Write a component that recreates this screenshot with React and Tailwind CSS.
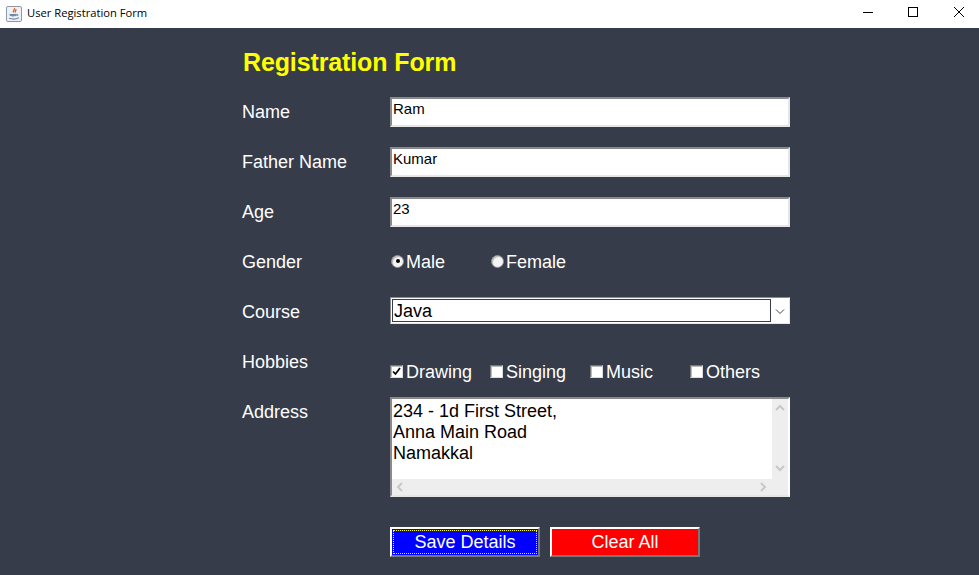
const labelCls = 'w-[148px] shrink-0 text-[18px] leading-[50px] text-white'

const JavaIcon = () => (
  <svg width="16" height="16" viewBox="0 0 16 16" className="shrink-0">
    <rect x="0.5" y="0.5" width="15" height="15" rx="1.5" fill="#eef1f5" stroke="#8d99a8" />
    <path d="M8.500 2c1 1.500-2 2.500-1 4.500 M10.500 3.500c-1.500 1-1.500 2-1 3" fill="none" stroke="#e0661f" strokeWidth="1.300" />
    <path d="M3.500 8h7v.8c0 1.200-1.500 1.700-3.500 1.700s-3.500-.5-3.500-1.700z M10.500 8.300h1.800v1.200l-1.800.7" fill="#6f8ba8" />
    <path d="M3 12.300c3 1 7 1 10-.6" fill="none" stroke="#6f8ba8" strokeWidth="1.100" />
  </svg>
)

const TitleBar = () => (
  <div className="flex h-[28px] items-center bg-white pl-[6px] text-black">
    <JavaIcon />
    <span className="mb-[2px] ml-[5px] font-['Open_Sans',sans-serif] text-[11.2px]">User Registration Form</span>
    <div className="ml-auto flex items-center">
      <svg width="134" height="28" viewBox="0 0 134 28">
        <path d="M18 12.500h10" stroke="#000" />
        <rect x="63.500" y="7.500" width="9" height="9" fill="none" stroke="#000" />
        <path d="M109 7l10 10M119 7l-10 10" stroke="#000" />
      </svg>
    </div>
  </div>
)

const TextInput = ({ value }) => (
  <div className="h-[30px] w-[400px] border-2 border-t-[#8a8a8a] border-l-[#8a8a8a] border-r-[#e6e6e6] border-b-[#e6e6e6] bg-white pl-px pt-px text-[15px] leading-[18px] text-black">
    {value}
  </div>
)

const Field = ({ label, value }) => (
  <div className="flex h-[50px] items-center">
    <div className={labelCls}>{label}</div>
    <TextInput value={value} />
  </div>
)

const Radio = ({ label, checked, className }) => (
  <div className={`flex items-center text-[18px] text-white ${className}`}>
    <span className="mb-[2px] ml-px flex h-[13px] w-[13px] items-center justify-center rounded-full border border-[#8c8c8c] bg-[#f4f4f4] shadow-[inset_1px_1px_0_#bbb]">
      {checked && <span className="h-[4px] w-[4px] rounded-full bg-black" />}
    </span>
    <span className="ml-[2px]">{label}</span>
  </div>
)

const Check = ({ label, checked, className }) => (
  <div className={`flex items-center text-[18px] text-white ${className}`}>
    <span className="mb-px flex h-[13px] w-[13px] items-center justify-center border border-t-[#777] border-l-[#777] border-r-[#ddd] border-b-[#ddd] bg-white shadow-[inset_1px_1px_0_#bbb]">
      {checked && (
        <svg width="9" height="9" viewBox="0 0 9 9">
          <path d="M1 4.500l2.500 2.500 4.500-6" fill="none" stroke="#000" strokeWidth="1.700" />
        </svg>
      )}
    </span>
    <span className="ml-[3px]">{label}</span>
  </div>
)

const Chevron = ({ d }) => (
  <svg width="10" height="10" viewBox="0 0 10 10">
    <path d={d} fill="none" stroke="#c8c8c8" strokeWidth="2" />
  </svg>
)

const AddressBox = () => (
  <div className="h-[100px] w-[400px] border-2 border-t-[#8a8a8a] border-l-[#8a8a8a] border-r-white border-b-[#e6e6e6] bg-[#eeeeee]">
    <div className="flex h-[80px]">
      <div className="flex-1 bg-white pl-px pt-[2px] text-[18px] leading-[21px] text-black">
        <div>234 - 1d First Street,</div>
        <div>Anna Main Road</div>
        <div>Namakkal</div>
      </div>
      <div className="flex w-[16px] flex-col items-center justify-between pb-[6px] pt-[4px]">
        <Chevron d="M1 7l4-4 4 4" />
        <Chevron d="M1 3l4 4 4-4" />
      </div>
    </div>
    <div className="flex h-[16px] items-center justify-between pl-[3px] pr-[20px]">
      <Chevron d="M7 1L3 5l4 4" />
      <Chevron d="M3 1l4 4-4 4" />
    </div>
  </div>
)

export default function App() {
  return (
    <div className="h-[575px] w-[979px] overflow-hidden bg-[#363c4a] font-['Liberation_Sans',Arial,sans-serif]">
      <TitleBar />
      <div className="pl-[242px] pt-[9px]">
        <div className="h-[50px] pl-px text-[25px] font-bold leading-[50px] tracking-[-0.12px] text-[#ffff00]">Registration Form</div>
        <Field label="Name" value="Ram" />
        <Field label="Father Name" value="Kumar" />
        <Field label="Age" value="23" />
        <div className="flex h-[50px] items-center">
          <div className={labelCls}>Gender</div>
          <Radio label="Male" checked className="w-[100px]" />
          <Radio label="Female" />
        </div>
        <div className="flex h-[50px] items-center">
          <div className={labelCls}>Course</div>
          <div className="mb-[3px] flex h-[27px] w-[400px] items-stretch border border-t-[#8a8a8a] border-l-[#8a8a8a] border-r-[#e6e6e6] border-b-[#e6e6e6] bg-white">
            <div className="my-px ml-px flex-1 border border-[#363c4a] pl-px pt-px text-[18px] leading-[21px] text-black">Java</div>
            <div className="flex w-[18px] items-center justify-center">
              <svg width="10" height="10" viewBox="0 0 10 10">
                <path d="M1 3.500l4 4 4-4" fill="none" stroke="#444" />
              </svg>
            </div>
          </div>
        </div>
        <div className="flex h-[50px]">
          <div className={labelCls}>Hobbies</div>
          <div className="flex h-[70px] items-center">
            <Check label="Drawing" checked className="w-[100px]" />
            <Check label="Singing" className="w-[100px]" />
            <Check label="Music" className="w-[100px]" />
            <Check label="Others" />
          </div>
        </div>
        <div className="flex">
          <div className={labelCls}>Address</div>
          <div className="pt-[10px]">
            <AddressBox />
            <div className="mt-[30px] flex gap-[10px]">
              <button className="h-[30px] w-[150px] border-2 border-t-white border-l-white border-r-[#777] border-b-[#777] bg-[#0000ff] p-px text-[18px] text-white">
                <div className="flex h-full items-center justify-center border border-dotted border-[#ffff00]">Save Details</div>
              </button>
              <button className="h-[30px] w-[150px] border-2 border-t-white border-l-white border-r-[#777] border-b-[#777] bg-[#ff0000] text-[18px] text-white">
                Clear All
              </button>
            </div>
          </div>
        </div>
      </div>
    </div>
  )
}
